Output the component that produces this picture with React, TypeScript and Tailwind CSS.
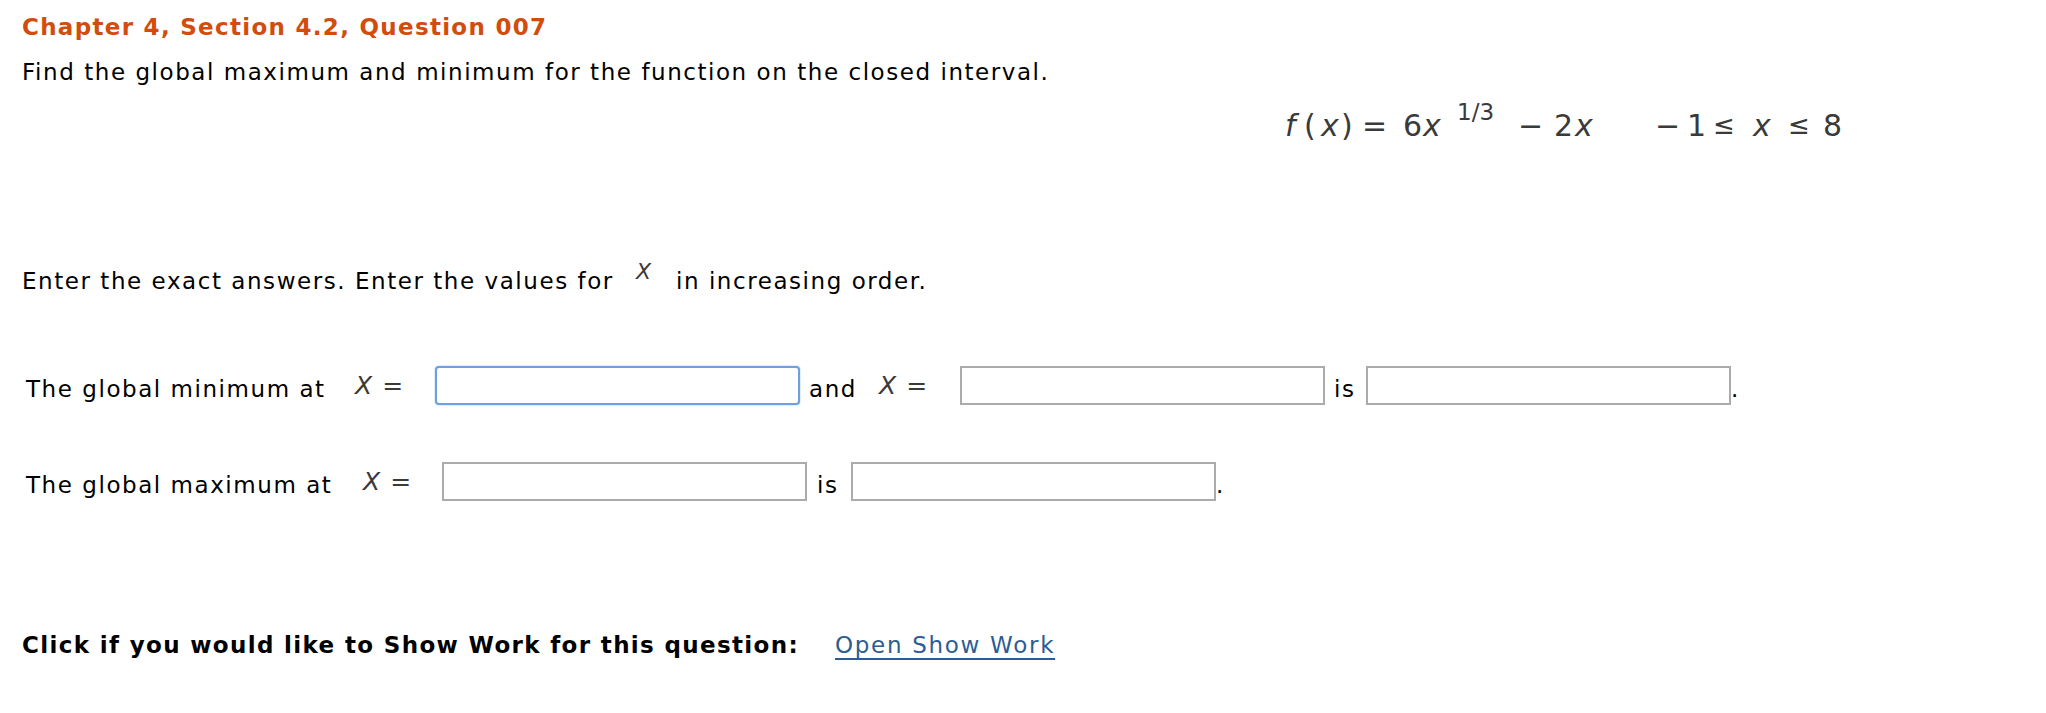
const body = "font-['DejaVu_Sans',sans-serif]";
const math = "font-['DejaVu_Sans',sans-serif] text-[#3a3a3a]";

function Box({ focused = false }: { focused?: boolean }) {
  return focused ? (
    <input className="h-[39px] w-[365px] shrink-0 rounded-[4px] border-2 border-[#6f9fe3] bg-white outline-none shadow-[0_0_2px_#9cc0f0]" />
  ) : (
    <input className="h-[39px] w-[365px] shrink-0 border-2 border-[#ababab] bg-white outline-none" />
  );
}

// "X =" label before the answer boxes
function VarX({ w }: { w: string }) {
  return (
    <span className={`${math} ${w} inline-block shrink-0 text-[25px] leading-none tracking-normal`}>
      <span className="italic">X</span>
      <span className="ml-[10px]">=</span>
    </span>
  );
}

function Txt({ w, children, className = "" }: { w: string; children: React.ReactNode; className?: string }) {
  return <span className={`${w} relative top-[4px] inline-block shrink-0 ${className}`}>{children}</span>;
}

const glyphs: { c: string; w: string; it?: boolean; sup?: boolean; sm?: boolean }[] = [
  { c: "f", w: "w-[19px]", it: true },
  { c: "(", w: "w-[17px]" },
  { c: "x", w: "w-[20px]", it: true },
  { c: ")", w: "w-[21px]" },
  { c: "=", w: "w-[41px]" },
  { c: "6", w: "w-[20px]" },
  { c: "x", w: "w-[34px]", it: true },
  { c: "1/3", w: "w-[61px]", sup: true },
  { c: "−", w: "w-[36px]" },
  { c: "2", w: "w-[21px]" },
  { c: "x", w: "w-[80px]", it: true },
  { c: "−", w: "w-[32px]" },
  { c: "1", w: "w-[26px]" },
  { c: "≤", w: "w-[40px]", sm: true },
  { c: "x", w: "w-[35px]", it: true },
  { c: "≤", w: "w-[35px]", sm: true },
  { c: "8", w: "w-[20px]" },
];

export default function App() {
  return (
    <div className={`${body} min-h-[713px] w-full bg-white pl-[22px] pt-[12px] text-black`}>
      <div className="text-[23px] leading-[30px] font-bold tracking-[1.3px] text-[#d24d0d]">
        Chapter 4, Section 4.2, Question 007
      </div>
      <div className="mt-[15px] text-[23px] leading-[30px] tracking-[1.55px]">
        Find the global maximum and minimum for the function on the closed interval.
      </div>

      <div className={`${math} mt-[16px] ml-[1263px] flex h-[44px] items-center text-[30px] whitespace-nowrap`}>
        {glyphs.map((g, i) => (
          <span
            key={i}
            className={`${g.w} inline-block shrink-0 ${g.it ? "italic" : ""} ${g.sup ? "relative -top-[13px] text-[23px]" : ""} ${g.sm ? "text-[26px]" : ""}`}
          >
            {g.c}
          </span>
        ))}
      </div>

      <div className="mt-[119px] flex h-[30px] items-center text-[23px] tracking-[1.55px] whitespace-nowrap">
        <span className="inline-block w-[614px] shrink-0">Enter the exact answers. Enter the values for</span>
        <span className={`${math} relative -top-[10px] inline-block w-[40px] shrink-0 text-[22px] italic tracking-normal`}>
          X
        </span>
        <span>in increasing order.</span>
      </div>

      <div className="mt-[69px] flex h-[40px] items-center pl-[4px] text-[23px] tracking-[1.55px] whitespace-nowrap">
        <Txt w="w-[329px]">The global minimum at</Txt>
        <VarX w="w-[80px]" />
        <Box focused />
        <Txt w="w-[70px]" className="ml-[9px]">
          and
        </Txt>
        <VarX w="w-[81px]" />
        <Box />
        <Txt w="w-[32px]" className="ml-[9px]">
          is
        </Txt>
        <Box />
        <Txt w="w-[10px]">.</Txt>
      </div>

      <div className="mt-[56px] flex h-[40px] items-center pl-[4px] text-[23px] tracking-[1.55px] whitespace-nowrap">
        <Txt w="w-[337px]">The global maximum at</Txt>
        <VarX w="w-[79px]" />
        <Box />
        <Txt w="w-[34px]" className="ml-[10px]">
          is
        </Txt>
        <Box />
        <Txt w="w-[10px]">.</Txt>
      </div>

      <div className="mt-[129px] flex h-[30px] items-center text-[23px] whitespace-nowrap">
        <span className="inline-block w-[813px] shrink-0 font-bold tracking-[1.35px]">
          Click if you would like to Show Work for this question:
        </span>
        <a
          href="#"
          className="tracking-[1.7px] text-[#2b5d93] underline decoration-[#2b5d93] decoration-2 underline-offset-[5px]"
        >
          Open Show Work
        </a>
      </div>
    </div>
  );
}
